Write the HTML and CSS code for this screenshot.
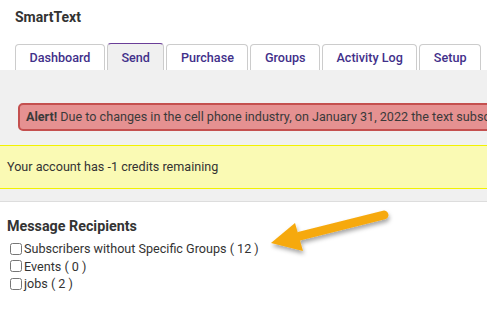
FILE: index.html
```html
<!DOCTYPE html>
<html lang="en">
<head>
    <meta charset="UTF-8">
    <title>SmartText</title>
    <link rel="stylesheet" href="styles.css">
</head>
<body>
    <div class="Header">
        <h3 class="Title">SmartText</h3>
        <ul class="Tabs">
            <li class="Tab">Dashboard</li>
            <li class="Tab Active">Send</li>
            <li class="Tab">Purchase</li>
            <li class="Tab">Groups</li>
            <li class="Tab">Activity Log</li>
            <li class="Tab">Setup</li>
        </ul>
    </div>

    <div class="Panel">
        <div class="AlertBox"><b>Alert!</b> Due to changes in the cell phone industry, on January 31, 2022 the text subscription service will be changing.</div>
        <div class="CreditsBox">Your account has -1 credits remaining</div>
    </div>

    <div class="Recipients">
        <h4 class="RecipientsTitle">Message Recipients</h4>
        <label class="Recipient"><input type="checkbox"> Subscribers without Specific Groups ( 12 )</label>
        <label class="Recipient"><input type="checkbox"> Events ( 0 )</label>
        <label class="Recipient"><input type="checkbox"> jobs ( 2 )</label>
    </div>

    <!-- seta de destaque -->
    <svg class="Pointer" width="130" height="60" viewBox="0 0 130 60">
        <defs>
            <filter id="shadow" x="-20%" y="-20%" width="140%" height="160%">
                <feDropShadow dx="1" dy="3" stdDeviation="2" flood-color="#000" flood-opacity="0.35"/>
            </filter>
        </defs>
        <g filter="url(#shadow)">
            <line x1="114" y1="13" x2="30" y2="34" stroke="#f6a90b" stroke-width="9" stroke-linecap="round"/>
            <polygon points="1,41 25,21 33,49" fill="#f6a90b"/>
        </g>
    </svg>
</body>
</html>
```

FILE: styles.css
```css
body {
    margin: 0;
    font-family: Roboto, "Liberation Sans", Arial, sans-serif;
    font-size: 12.6px;
    color: #333333;
    background-color: #FFFFFF;
    overflow: hidden;
    position: relative;
}

/* Cabeçalho e abas */
.Header {
    padding: 9px 15px 0 15px;
}

.Title {
    margin: 0;
    font-size: 14px;
    font-weight: bold;
    line-height: 16px;
    color: #333333;
}

.Tabs {
    display: flex;
    gap: 2px;
    margin: 18px 0 0 0;
    padding: 0;
    list-style: none;
}

.Tab {
    height: 25px;
    line-height: 26px;
    padding: 0 13.5px;
    border: solid 1px #cccccc;
    border-bottom: none;
    border-radius: 4px 4px 0 0;
    background-color: #FFFFFF;
    color: #42308a;
    font-weight: 500;
    white-space: nowrap;
    margin-top: 1px;
}

.Tab.Active {
    background-color: #f0f0f0;
    border-top: solid 1px #6a3e98;
    margin-top: 0;
    height: 26px;
    line-height: 28px;
}

/* Painel cinza */
.Panel {
    background-color: #f0f0f0;
    border-bottom: solid 1px #dddddd;
    padding: 33px 0 12px 0;
}

.AlertBox {
    margin-left: 18px;
    width: 600px;
    height: 24px;
    line-height: 24px;
    padding: 0 6px;
    white-space: nowrap;
    overflow: hidden;
    background-color: #e59191;
    border: solid 2px #c4504f;
    border-radius: 5px;
    color: #3a3a3a;
}

.CreditsBox {
    margin-top: 14px;
    height: 42px;
    line-height: 42px;
    padding: 0 7px;
    background-color: #fafab4;
    border-top: solid 1px #f2f200;
    border-bottom: solid 1px #f2f200;
}

/* Destinatários */
.Recipients {
    padding: 16px 7px;
}

.RecipientsTitle {
    margin: 0 0 5px 0;
    font-size: 14.3px;
    font-weight: bold;
    line-height: 17px;
}

.Recipient {
    display: flex;
    align-items: center;
    height: 17.5px;
}

.Recipient input {
    width: 12px;
    height: 12px;
    margin: 0 2px 0 3px;
}

.Pointer {
    position: absolute;
    left: 270px;
    top: 202px;
}
```
